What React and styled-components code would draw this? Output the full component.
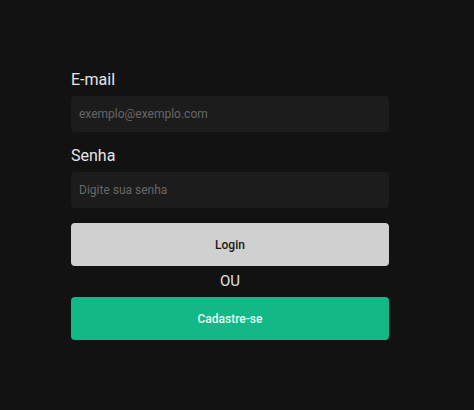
import React from 'react';
import styled, { createGlobalStyle } from 'styled-components';

const GlobalStyle = createGlobalStyle`
	html, body {
		margin: 0;
		padding: 0;
		background: #121212;
	}
	body {
		font-family: Roboto, "Liberation Sans", Arial, sans-serif;
	}
`

const Page = styled.main`
	min-height: 410px;
	box-sizing: border-box;
	padding: 70px 0 0 71px;
	background: #121212;
`

const Form = styled.form`
	width: 318px;
	display: flex;
	flex-direction: column;
`

const Label = styled.label`
	color: #e6e6e6;
	font-size: 16px;
	line-height: 20px;
	margin-bottom: 6px;
`

const Input = styled.input`
	height: 36px;
	box-sizing: border-box;
	border: none;
	outline: none;
	border-radius: 4px;
	background: #1c1c1c;
	color: #ddd;
	padding: 0 8px;
	font-family: inherit;
	font-size: 12px;
	margin-bottom: ${({ $last }) => ($last ? '15px' : '14px')};

	&::placeholder {
		color: #676767;
	}
`

const Button = styled.button`
	height: 43px;
	border: none;
	border-radius: 4px;
	font-family: inherit;
	font-size: 12px;
	font-weight: 500;
	cursor: pointer;
	background: ${({ $primary }) => ($primary ? '#12b886' : '#d0d0d0')};
	color: ${({ $primary }) => ($primary ? '#eafff6' : '#1a1a1a')};
`

const Divider = styled.span`
	color: #e0e0e0;
	text-align: center;
	font-size: 15px;
	line-height: 31px;
`

const App = () => {
	return (
		<>
			<GlobalStyle />
			<Page>
				<Form onSubmit={e => e.preventDefault()}>
					<Label htmlFor="email">E-mail</Label>
					<Input id="email" type="email" placeholder="exemplo@exemplo.com" />
					<Label htmlFor="senha">Senha</Label>
					<Input id="senha" type="password" placeholder="Digite sua senha" $last />
					<Button type="submit">Login</Button>
					<Divider>OU</Divider>
					<Button type="button" $primary>Cadastre-se</Button>
				</Form>
			</Page>
		</>
	)
}

export default App
